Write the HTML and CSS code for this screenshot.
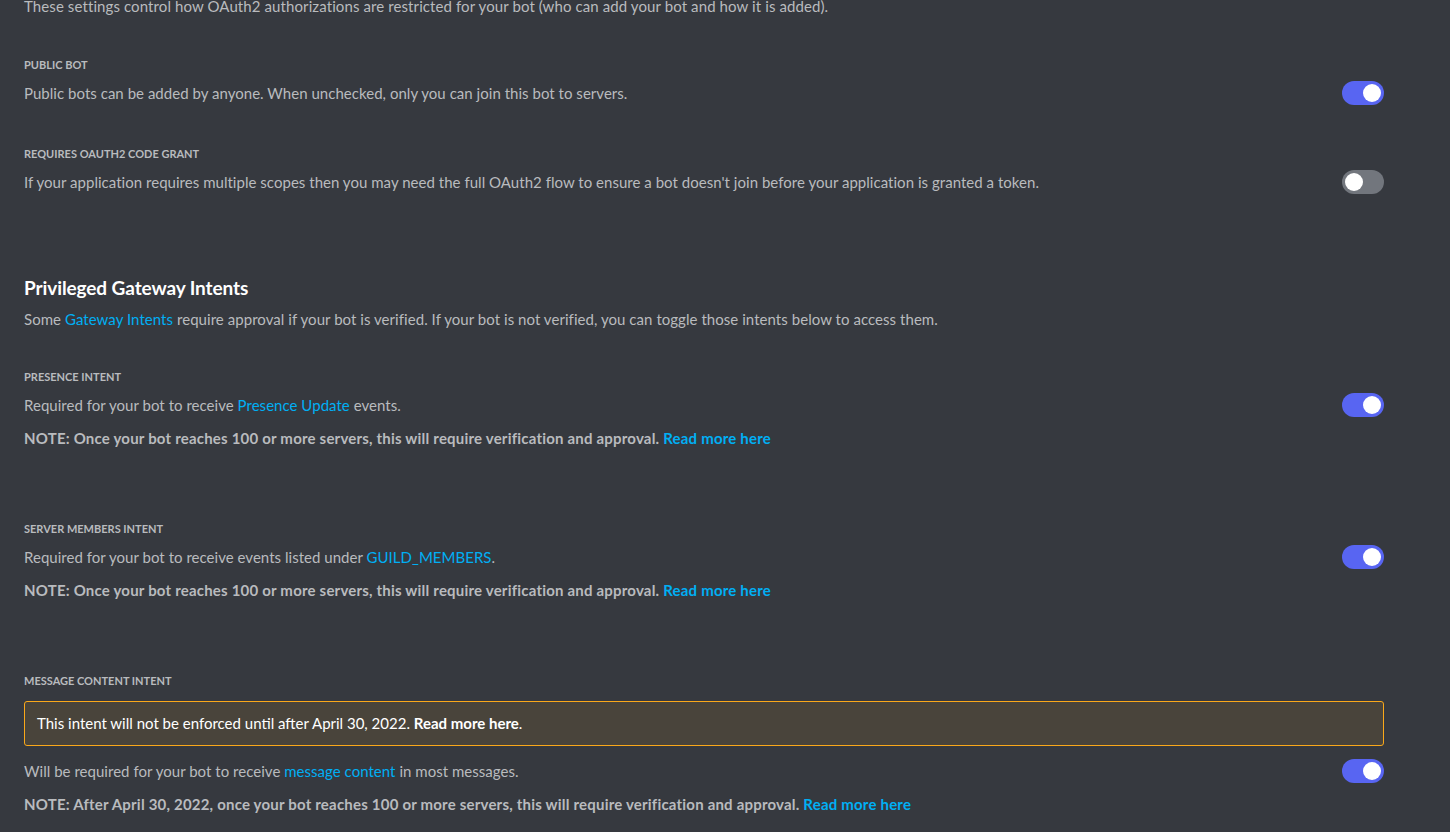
FILE: index.html
```html
<!DOCTYPE html>
<html lang="en">
<head>
    <title>Bot Settings</title>
    <meta charset="UTF-8">
    <meta name="viewport" content="width=device-width, initial-scale=1.0">
    <link rel="stylesheet" href="styles.css">
</head>
<body>
    <main class="content">
        <p class="intro">These settings control how OAuth2 authorizations are restricted for your bot (who can add your bot and how it is added).</p>

        <section class="setting first">
            <h5 class="label">Public Bot</h5>
            <div class="row">
                <p class="desc">Public bots can be added by anyone. When unchecked, only you can join this bot to servers.</p>
                <span class="toggle on"><span class="knob"></span></span>
            </div>
        </section>

        <section class="setting">
            <h5 class="label">Requires OAuth2 Code Grant</h5>
            <div class="row">
                <p class="desc">If your application requires multiple scopes then you may need the full OAuth2 flow to ensure a bot doesn't join before your application is granted a token.</p>
                <span class="toggle"><span class="knob"></span></span>
            </div>
        </section>

        <h2 class="title">Privileged Gateway Intents</h2>
        <p class="subtitle">Some <a href="#">Gateway Intents</a> require approval if your bot is verified. If your bot is not verified, you can toggle those intents below to access them.</p>

        <section class="setting intent first-intent">
            <h5 class="label">Presence Intent</h5>
            <div class="row">
                <p class="desc">Required for your bot to receive <a href="#">Presence Update</a> events.</p>
                <span class="toggle on"><span class="knob"></span></span>
            </div>
            <p class="note">NOTE: Once your bot reaches 100 or more servers, this will require verification and approval. <a href="#">Read more here</a></p>
        </section>

        <section class="setting intent">
            <h5 class="label">Server Members Intent</h5>
            <div class="row">
                <p class="desc">Required for your bot to receive events listed under <a href="#">GUILD_MEMBERS</a>.</p>
                <span class="toggle on"><span class="knob"></span></span>
            </div>
            <p class="note">NOTE: Once your bot reaches 100 or more servers, this will require verification and approval. <a href="#">Read more here</a></p>
        </section>

        <section class="setting intent">
            <h5 class="label">Message Content Intent</h5>
            <div class="warning">This intent will not be enforced until after April 30, 2022. <b>Read more here</b>.</div>
            <div class="row">
                <p class="desc">Will be required for your bot to receive <a href="#">message content</a> in most messages.</p>
                <span class="toggle on"><span class="knob"></span></span>
            </div>
            <p class="note">NOTE: After April 30, 2022, once your bot reaches 100 or more servers, this will require verification and approval. <a href="#">Read more here</a></p>
        </section>
    </main>
</body>
</html>
```

FILE: styles.css
```css
body {
    margin: 0;
    padding: 0;
    background-color: #36393f;
    font-family: Lato, "Noto Sans", sans-serif;
    color: #b9bbbe;
    overflow: hidden;
}
p {
    margin: 0;
}
a {
    color: #00aff4;
    text-decoration: none;
}
.content {
    width: 1360px;
    padding-left: 24px;
}
.intro {
    margin-top: -4px;
    font-size: 15px;
    line-height: 20px;
    letter-spacing: 0.1px;
}
.setting {
    margin-top: 41px;
}
.label {
    margin: 0 0 8px 0;
    font-size: 11px;
    line-height: 16px;
    font-weight: 700;
    text-transform: uppercase;
    color: #b9bbbe;
}
.row {
    display: flex;
    align-items: center;
    justify-content: space-between;
    height: 24px;
}
.desc {
    font-size: 15px;
    line-height: 20px;
    letter-spacing: 0.03px;
}
.toggle {
    position: relative;
    flex: none;
    width: 42px;
    height: 24px;
    border-radius: 12px;
    background-color: #72767d;
}
.toggle.on {
    background-color: #5865f2;
}
.knob {
    position: absolute;
    top: 3px;
    left: 3px;
    width: 18px;
    height: 18px;
    border-radius: 50%;
    background-color: #fff;
}
.toggle.on .knob {
    left: 21px;
}
.title {
    margin: 82px 0 0 0;
    font-size: 19px;
    line-height: 24px;
    font-weight: 700;
    letter-spacing: -0.1px;
    color: #fff;
}
.subtitle {
    margin-top: 9px;
    font-size: 15px;
    line-height: 20px;
    letter-spacing: 0.05px;
}
.intent {
    margin-top: 73px;
}
.intent.first-intent {
    margin-top: 40px;
}
.note {
    margin-top: 11px;
    font-size: 15px;
    line-height: 20px;
    font-weight: 700;
    letter-spacing: 0.2px;
}
.note a {
    font-weight: 700;
}
.warning {
    margin: 12px 0 13px 0;
    padding: 11px 12px;
    line-height: 21px;
    font-size: 15px;
    color: #fff;
    background-color: #49443b;
    border: 1px solid #faa81a;
    border-radius: 3px;
}
```
